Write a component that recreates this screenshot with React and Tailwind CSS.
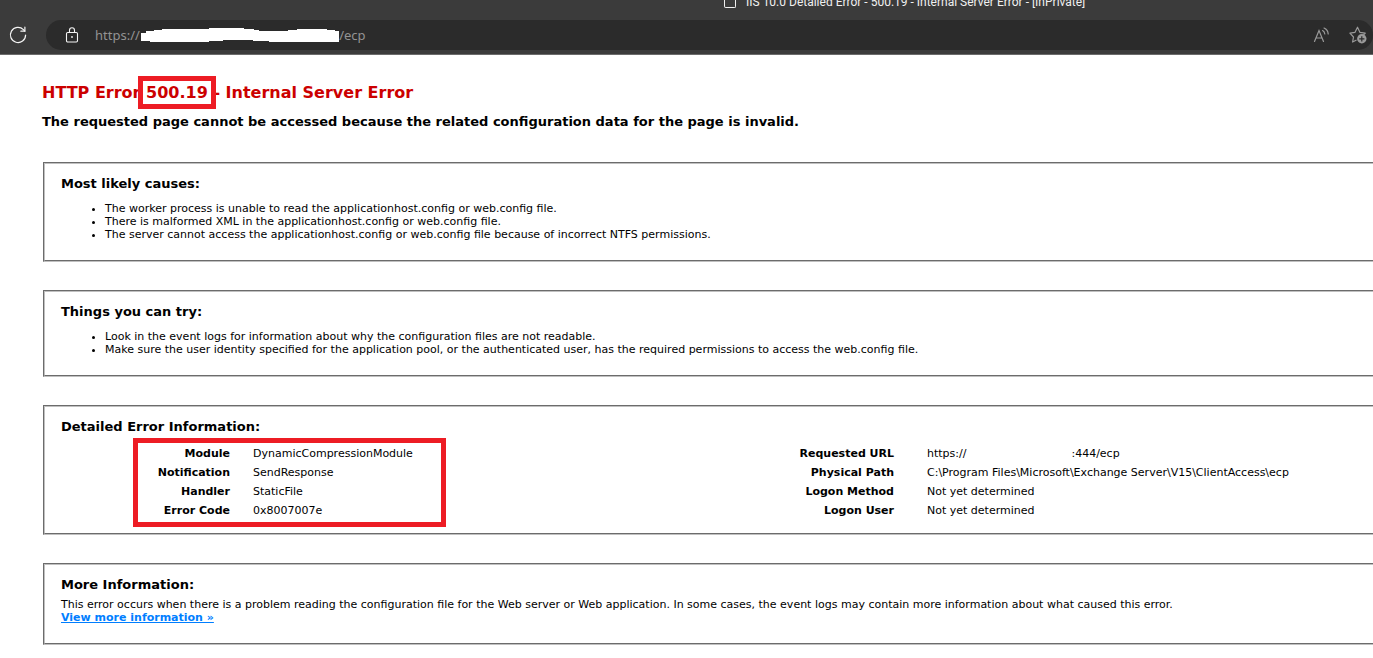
import React, { useState } from "react";

const causes = [
  "The worker process is unable to read the applicationhost.config or web.config file.",
  "There is malformed XML in the applicationhost.config or web.config file.",
  "The server cannot access the applicationhost.config or web.config file because of incorrect NTFS permissions.",
];

const suggestions = [
  "Look in the event logs for information about why the configuration files are not readable.",
  "Make sure the user identity specified for the application pool, or the authenticated user, has the required permissions to access the web.config file.",
];

const moduleDetails = [
  ["Module", "DynamicCompressionModule"],
  ["Notification", "SendResponse"],
  ["Handler", "StaticFile"],
  ["Error Code", "0x8007007e"],
];

const requestDetails = [
  ["Requested URL", <>https://<span className="inline-block w-[105px]" />:444/ecp</>],
  ["Physical Path", "C:\\Program Files\\Microsoft\\Exchange Server\\V15\\ClientAccess\\ecp"],
  ["Logon Method", "Not yet determined"],
  ["Logon User", "Not yet determined"],
];

// the host name is blanked out, so the address keeps a gap for it
const address = "https://" + "\u2003".repeat(15) + "\u2004/ecp";

const BrowserBar = () => {
  const [url, setUrl] = useState(address);

  return (
    <header className="bg-[#3b3b3b] border-b border-[#6b6b6b]">
      {/* Window title */}
      <div className="h-5 overflow-hidden flex items-start gap-2.5 pl-[724px] font-[Roboto,sans-serif] text-xs leading-1 text-[#f0f0f0] whitespace-nowrap">
        <span className="w-3 h-2 shrink-0 border border-t-0 border-[#f0f0f0] rounded-b-xs" />
        <span>IIS 10.0 Detailed Error - 500.19 - Internal Server Error - [InPrivate]</span>
      </div>
      {/* Address bar */}
      <div className="flex items-center pb-1 pl-2">
        <button type="button" aria-label="Refresh" className="w-5 h-5 mr-[18px] shrink-0">
          <svg viewBox="0 0 20 20" className="w-5 h-5" fill="none" stroke="#f4f4f4" strokeWidth="1.2" strokeLinecap="round">
            <path d="M17.6 10a7.6 7.6 0 1 1-2.2-5.4l1.4 1.5" />
            <path d="M16.9 2.2v4h-4" />
          </svg>
        </button>
        <div className="flex-1 flex items-center h-[30px] bg-[#2b2b2b] rounded-full pl-[19px] pr-1.5">
          <svg viewBox="0 0 14 16" className="w-3.5 h-4 shrink-0" fill="none" stroke="#f4f4f4" strokeWidth="1.1">
            <rect x="1.5" y="5.5" width="11" height="9.5" rx="1.2" />
            <path d="M4.5 5.5V3.2a2.5 2.5 0 0 1 5 0v2.3" />
            <circle cx="7" cy="10" r="0.9" fill="#f4f4f4" stroke="none" />
          </svg>
          <div className="relative flex-1 ml-4">
            <input
              type="text"
              aria-label="Address"
              value={url}
              onChange={(e) => setUrl(e.target.value)}
              className="block w-full h-[30px] bg-transparent font-['Noto_Sans',sans-serif] text-[13px] text-[#939393] focus:outline-none"
            />
            <svg viewBox="0 0 198 14" className="absolute left-[46px] top-2 w-[198px] h-3.5 pointer-events-none" fill="#fff">
              <path d="M0 5h5V3h8V2h8V1h47V0h35v1h10v1h5v1h29V2h9V1h30v1h8v1h4v11h-70v-1h-16v-1H82v1H68v1H9v-1H0z" />
            </svg>
          </div>
          <button type="button" aria-label="Read aloud" className="mr-[19px] shrink-0">
            <svg viewBox="0 0 17 17" className="w-[17px] h-[17px]" fill="none" stroke="#9a9a9a" strokeWidth="1.2" strokeLinecap="round">
              <path d="M1.5 14.5 6 3.5l4.5 11M3 11h6" />
              <path d="M9.6 3.6a4.500 4.500 0 0 1 2.200 3.400M11 1a7 7 0 0 1 4.200 6" />
            </svg>
          </button>
          <button type="button" aria-label="Add to favorites" className="shrink-0">
            <svg viewBox="0 0 18 18" className="w-[18px] h-[18px]" fill="none" stroke="#9a9a9a" strokeWidth="1.2" strokeLinejoin="round">
              <path d="M7.500 14 3.600 16l.9-5L.9 7.200l5-.8L8.500 1.200l2.500 5.200 5.200.8-1.700 1.600" />
              <circle cx="12.800" cy="12.800" r="4.700" fill="#9a9a9a" stroke="none" />
              <path d="M12.800 10.200v5.200M10.200 12.800h5.200" stroke="#2b2b2b" />
            </svg>
          </button>
        </div>
      </div>
    </header>
  );
};

const Panel = ({ title, className, children }) => (
  <section className={`border-2 border-r-0 [border-style:groove] border-[#c0c0c0] pl-4 pt-3 ${className}`}>
    <h3 className="text-[13px] leading-4 font-bold">{title}</h3>
    {children}
  </section>
);

const BulletList = ({ items }) => (
  <ul className="mt-2.5 pl-11 list-disc">
    {items.map((item) => (
      <li key={item}>{item}</li>
    ))}
  </ul>
);

const DetailTable = ({ rows, labelClass, valueClass }) => (
  <table className="w-full leading-[19px] whitespace-nowrap">
    <tbody>
      {rows.map(([label, value]) => (
        <tr key={label}>
          <th scope="row" className={`text-right font-bold ${labelClass}`}>{label}</th>
          <td className={valueClass}>{value}</td>
        </tr>
      ))}
    </tbody>
  </table>
);

const App = () => {
  return (
    <div className="min-h-screen bg-white overflow-x-hidden">
      <BrowserBar />
      <main className="pt-7 pb-3 pl-[42px] font-['DejaVu_Sans',Verdana,sans-serif] text-[11px] leading-[13px] text-black">
        <h1 className="text-base leading-5 font-bold text-[#cc0000]">
          HTTP Error{" "}
          <span className="relative">
            500.19
            <span className="absolute -inset-x-2 -inset-y-[7px] border-5 border-[#ed1c24]" />
          </span>{" "}
          - Internal Server Error
        </h1>
        <h2 className="mt-[11px] mb-8 text-[13px] leading-4 font-bold">
          The requested page cannot be accessed because the related configuration data for the page is invalid.
        </h2>

        <div className="flex flex-col gap-7 pl-px">
          <Panel title="Most likely causes:" className="pb-[19px]">
            <BulletList items={causes} />
          </Panel>

          <Panel title="Things you can try:" className="pb-[19px]">
            <BulletList items={suggestions} />
          </Panel>

          <Panel title="Detailed Error Information:" className="pb-[13px]">
            <div className="mt-[9px] grid grid-cols-2">
              <div className="relative">
                <DetailTable rows={moduleDetails} labelClass="w-[169px]" valueClass="pl-[23px]" />
                <div className="absolute left-[72px] w-[313px] -top-1.5 -bottom-[7px] border-5 border-[#ed1c24]" />
              </div>
              <DetailTable rows={requestDetails} labelClass="w-[177px]" valueClass="pl-[33px]" />
            </div>
          </Panel>

          <Panel title="More Information:" className="pb-[19px]">
            <p className="mt-[5px]">
              This error occurs when there is a problem reading the configuration file for the Web server or Web application. In some cases, the event logs may contain more information about what caused this error.
            </p>
            <a href="#" className="block w-fit font-bold text-[#007eff] underline">
              View more information »
            </a>
          </Panel>
        </div>
      </main>
    </div>
  );
};

export default App;
